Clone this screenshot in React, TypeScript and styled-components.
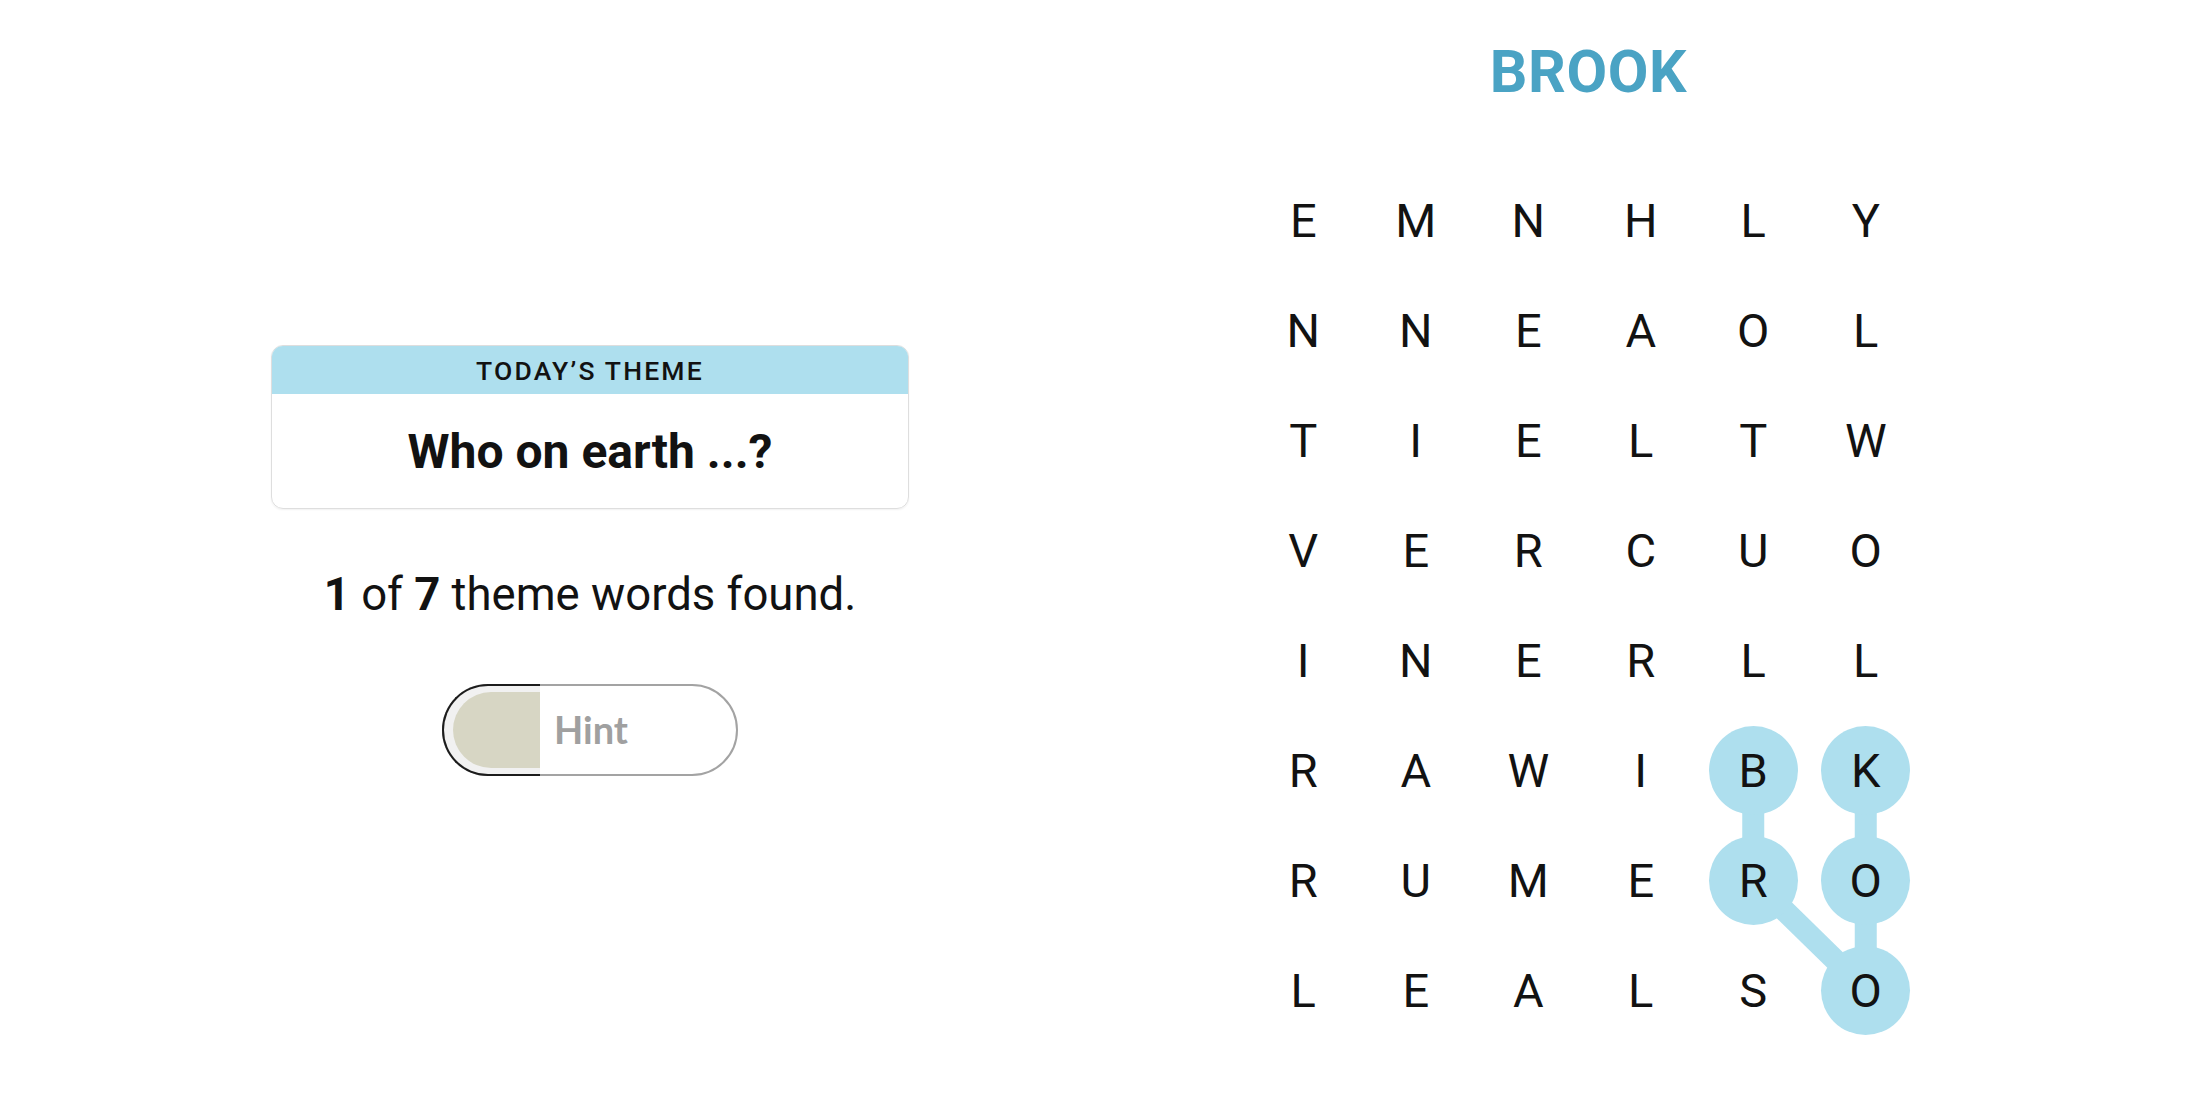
import React from 'react'
import styled, { createGlobalStyle } from 'styled-components'

const GlobalStyle = createGlobalStyle`
    html, body {
        margin: 0;
        padding: 0;
        background: #ffffff;
        font-family: Roboto, 'Liberation Sans', Arial, sans-serif;
        color: #121212;
    }
`

const BLUE = '#aedfee'
const COL_W = 112.5
const ROW_H = 110

const board = [
    'EMNHLY',
    'NNEAOL',
    'TIELTW',
    'VERCUO',
    'INERLL',
    'RAWIBK',
    'RUMERO',
    'LEALSO',
]

// cells of the word being traced, in order
const path: [number, number][] = [
    [4, 5],
    [4, 6],
    [5, 7],
    [5, 6],
    [5, 5],
]

const Page = styled.main`
    display: flex;
    align-items: flex-start;
    gap: 339px;
    width: 2200px;
    height: 1100px;
    padding-left: 272px;
    box-sizing: border-box;
    overflow: hidden;
`

const LeftColumn = styled.section`
    width: 636px;
    padding-top: 345px;
    display: flex;
    flex-direction: column;
    align-items: center;
`

const ThemeCard = styled.div`
    width: 100%;
    border: 1px solid #dedede;
    border-radius: 12px;
    overflow: hidden;
    box-shadow: 0 1px 2px rgba(0, 0, 0, 0.06);
`

const ThemeHeader = styled.div`
    height: 48px;
    background: ${BLUE};
    display: flex;
    align-items: center;
    justify-content: center;
    font-size: 26.5px;
    font-weight: 500;
    letter-spacing: 2.2px;
    text-transform: uppercase;
`

const ThemeBody = styled.div`
    height: 114px;
    display: flex;
    align-items: center;
    justify-content: center;
    font-size: 48px;
    font-weight: 700;
`

const Count = styled.p`
    margin: 58px 0 0;
    font-size: 45.5px;
    line-height: 56px;

    b {
        font-weight: 700;
    }
`

const HintButton = styled.button`
    position: relative;
    margin-top: 61px;
    width: 296px;
    height: 92px;
    padding: 0 0 2px 110px;
    box-sizing: border-box;
    border: 2px solid #a3a3a3;
    border-radius: 46px;
    background: #ffffff;
    display: flex;
    align-items: center;
    font-family: Lato, Roboto, sans-serif;
    font-weight: 700;
    font-size: 38px;
    color: #a0a0a0;
    cursor: pointer;
`

const Meter = styled.span`
    position: absolute;
    top: -2px;
    left: -2px;
    bottom: -2px;
    width: 98px;
    box-sizing: border-box;
    border: 2px solid #1c1c1c;
    border-right: none;
    border-radius: 46px 0 0 46px;
    padding: 6px 0 6px 9px;
    background: #f1f1f1;
    display: flex;
`

const MeterFill = styled.span`
    flex: 1;
    background: #d7d6c4;
    border-radius: 40px 0 0 40px;
`

const RightColumn = styled.section`
    width: ${COL_W * 6}px;
    padding-top: 32px;
    display: flex;
    flex-direction: column;
    align-items: center;
`

const Title = styled.h1`
    margin: 0 0 53px 8px;
    height: 80px;
    line-height: 80px;
    font-size: 59px;
    font-weight: 700;
    color: #4aa3c4;
    letter-spacing: 0.6px;
`

const BoardWrap = styled.div`
    position: relative;
`

const Links = styled.svg`
    position: absolute;
    inset: 0;
    pointer-events: none;
`

const Grid = styled.div`
    position: relative;
    display: grid;
    grid-template-columns: repeat(6, ${COL_W}px);
    grid-template-rows: repeat(8, ${ROW_H}px);
`

const Cell = styled.div`
    display: flex;
    align-items: center;
    justify-content: center;
`

const Letter = styled.span<{ $selected?: boolean }>`
    width: 89px;
    height: 89px;
    border-radius: 50%;
    display: flex;
    align-items: center;
    justify-content: center;
    font-size: 47px;
    line-height: 1;
    background: ${({ $selected }) => ($selected ? BLUE : 'transparent')};
`

const cx = (c: number) => c * COL_W + COL_W / 2
const cy = (r: number) => r * ROW_H + ROW_H / 2

const App = () => {
    const isSelected = (c: number, r: number) =>
        path.some(([pc, pr]) => pc === c && pr === r)

    return (
        <Page>
            <GlobalStyle />
            <LeftColumn>
                <ThemeCard>
                    <ThemeHeader>Today’s theme</ThemeHeader>
                    <ThemeBody>Who on earth ...?</ThemeBody>
                </ThemeCard>
                <Count>
                    <b>1</b> of <b>7</b> theme words found.
                </Count>
                <HintButton>
                    <Meter>
                        <MeterFill />
                    </Meter>
                    Hint
                </HintButton>
            </LeftColumn>

            <RightColumn>
                <Title>BROOK</Title>
                <BoardWrap>
                    <Links width={COL_W * 6} height={ROW_H * 8}>
                        {path.slice(1).map(([c, r], i) => {
                            const [pc, pr] = path[i]
                            return (
                                <line
                                    key={i}
                                    x1={cx(pc)}
                                    y1={cy(pr)}
                                    x2={cx(c)}
                                    y2={cy(r)}
                                    stroke={BLUE}
                                    strokeWidth={22}
                                />
                            )
                        })}
                    </Links>
                    <Grid>
                        {board.map((row, r) =>
                            row.split('').map((ch, c) => (
                                <Cell key={`${r}-${c}`}>
                                    <Letter $selected={isSelected(c, r)}>
                                        {ch}
                                    </Letter>
                                </Cell>
                            ))
                        )}
                    </Grid>
                </BoardWrap>
            </RightColumn>
        </Page>
    )
}

export default App
